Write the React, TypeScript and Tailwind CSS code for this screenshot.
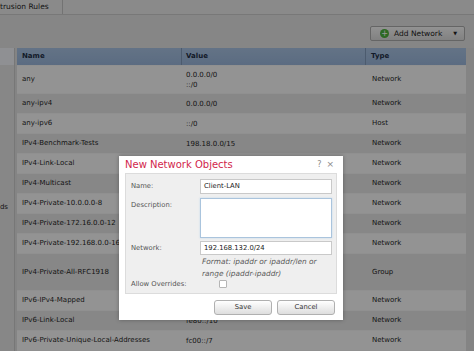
// values that sit under the dialog are left out; they are never visible
const rows = [
  { name: 'any', value: ['0.0.0.0/0', '::/0'], type: 'Network', h: 'h-[27px]' },
  { name: 'any-ipv4', value: ['0.0.0.0/0'], type: 'Network', h: 'h-[19px]' },
  { name: 'any-ipv6', value: ['::/0'], type: 'Host', h: 'h-[19px]' },
  { name: 'IPv4-Benchmark-Tests', value: ['198.18.0.0/15'], type: 'Network', h: 'h-[19px]' },
  { name: 'IPv4-Link-Local', value: [], type: 'Network', h: 'h-[19px]' },
  { name: 'IPv4-Multicast', value: [], type: 'Network', h: 'h-[19px]' },
  { name: 'IPv4-Private-10.0.0.0-8', value: [], type: 'Network', h: 'h-[19px]' },
  { name: 'IPv4-Private-172.16.0.0-12', value: [], type: 'Network', h: 'h-[19px]' },
  { name: 'IPv4-Private-192.168.0.0-16', value: [], type: 'Network', h: 'h-[19px]' },
  { name: 'IPv4-Private-All-RFC1918', value: [], type: 'Group', h: 'h-[36px]' },
  { name: 'IPv6-IPv4-Mapped', value: [], type: 'Network', h: 'h-[19px]' },
  { name: 'IPv6-Link-Local', value: ['fe80::/10'], type: 'Network', h: 'h-[19px]' },
  { name: 'IPv6-Private-Unique-Local-Addresses', value: ['fc00::/7'], type: 'Network', h: 'h-[19px]' },
];

export default function App() {
  return (
    <div className="relative w-[474px] h-[351px] overflow-hidden bg-[#dcdcdc] font-['DejaVu_Sans',sans-serif] text-[7px] text-[#262626]">
      {/* tab strip */}
      <div className="flex h-[15px] bg-[#e6e6e6] border-b border-[#c8c8c8]">
        <div className="w-[63px] border-r border-[#c0c0c0] flex items-center text-[7.5px] text-[#262626]">
          trusion Rules
        </div>
      </div>

      {/* toolbar */}
      <div className="flex justify-end h-[33px] pt-[11px] pr-[9px] bg-[#e0e0e0]">
        <button className="flex items-center h-[15px] w-[95px] pl-[9px] pr-[7px] rounded-[2px] border border-[#a9a9a9] bg-gradient-to-b from-[#f4f4f4] to-[#d8d8d8] text-[7.5px] text-[#222]">
          <span className="flex items-center justify-center w-[9px] h-[9px] rounded-full bg-[#4caf3c] text-white text-[8px] leading-none">+</span>
          <span className="ml-[5px]">Add Network</span>
          <span className="ml-auto text-[5px]">▼</span>
        </button>
      </div>

      {/* body */}
      <div className="flex">
        <div className="w-[15px] h-[303px] border-r border-[#c6c6c6] bg-[#e2e2e2] flex flex-col">
          <div className="h-[17px] bg-[#eef1f5]" />
          <div className="mt-[136px] h-[12px] flex items-center justify-end pr-[6px]">ds</div>
        </div>

        <div className="ml-[2px] w-[449px] flex flex-col gap-[1px] bg-[#f0f0f0]">
          <div className="flex h-[17px] bg-gradient-to-b from-[#a6c0e0] to-[#98b4d8] font-bold text-[#1e2d44]">
            <div className="w-[165px] pl-[5px] flex items-center border-r border-[#7f98b8]">Name</div>
            <div className="w-[184px] pl-[4px] flex items-center border-r border-[#7f98b8]">Value</div>
            <div className="flex-1 pl-[5px] flex items-center">Type</div>
          </div>
          {rows.map((r, i) => (
            <div key={r.name} className={`flex ${r.h} ${i % 2 === 0 ? 'bg-[#f6f6f6]' : 'bg-[#e1e1e1]'}`}>
              <div className="w-[165px] pl-[5px] flex items-center whitespace-nowrap">{r.name}</div>
              <div className="w-[184px] pl-[4px] flex flex-col justify-center leading-[10px]">
                {r.value.map((v) => (
                  <span key={v}>{v}</span>
                ))}
              </div>
              <div className="flex-1 pl-[6px] flex items-center">{r.type}</div>
            </div>
          ))}
        </div>
      </div>

      {/* dim overlay */}
      <div className="absolute inset-0 bg-black/40" />

      {/* dialog */}
      <div className="absolute left-[119px] top-[156px] w-[224px] h-[164px] bg-white shadow-[0_0_4px_rgba(0,0,0,0.3)] flex flex-col">
        <div className="flex items-center h-[17px] pl-[6px] pr-[9px]">
          <span className="text-[10px] text-[#d21f4b]">New Network Objects</span>
          <span className="ml-auto text-[8px] text-[#8a8a8a]">?</span>
          <span className="ml-[5px] text-[9px] text-[#8a8a8a]">×</span>
        </div>

        <div className="mx-[6px] h-[121px] bg-[#efefef] border border-[#dcdcdc] pl-[5px] pr-[4px] pt-[5px] text-[6.8px] text-[#555]">
          <div className="flex items-center h-[15px]">
            <span className="w-[69px]">Name:</span>
            <div className="flex-1 h-[15px] bg-white border border-[#c9c9c9] flex items-center pl-[3px] text-[#222]">Client-LAN</div>
          </div>
          <div className="flex mt-[4px]">
            <span className="w-[69px] pt-[2px]">Description:</span>
            <div className="flex-1 h-[40px] bg-white border border-[#aac4dd] shadow-[0_0_2px_#c4d8ec]" />
          </div>
          <div className="flex items-center mt-[3px]">
            <span className="w-[69px]">Network:</span>
            <div className="flex-1 h-[14px] bg-white border border-[#c9c9c9] flex items-center pl-[3px] text-[#222]">192.168.132.0/24</div>
          </div>
          <div className="pl-[71px] pt-[1px] italic text-[7.4px] leading-[12px] text-[#5a5a5a]">
            <div>Format: ipaddr or ipaddr/len or</div>
            <div>range (ipaddr-ipaddr)</div>
          </div>
          <div className="flex items-center h-[12px] mt-[-2px]">
            <span className="w-[88px]">Allow Overrides:</span>
            <span className="w-[8px] h-[8px] bg-white border border-[#b5b5b5] rounded-[1px]" />
          </div>
        </div>

        <div className="flex justify-end gap-[5px] pr-[8px] mt-[6px]">
          <button className="w-[58px] h-[15px] rounded-[3px] border border-[#b0b0b0] bg-gradient-to-b from-white to-[#dedede] text-[6.8px] text-[#333]">Save</button>
          <button className="w-[58px] h-[15px] rounded-[3px] border border-[#b0b0b0] bg-gradient-to-b from-white to-[#dedede] text-[6.8px] text-[#333]">Cancel</button>
        </div>
      </div>
    </div>
  );
}
